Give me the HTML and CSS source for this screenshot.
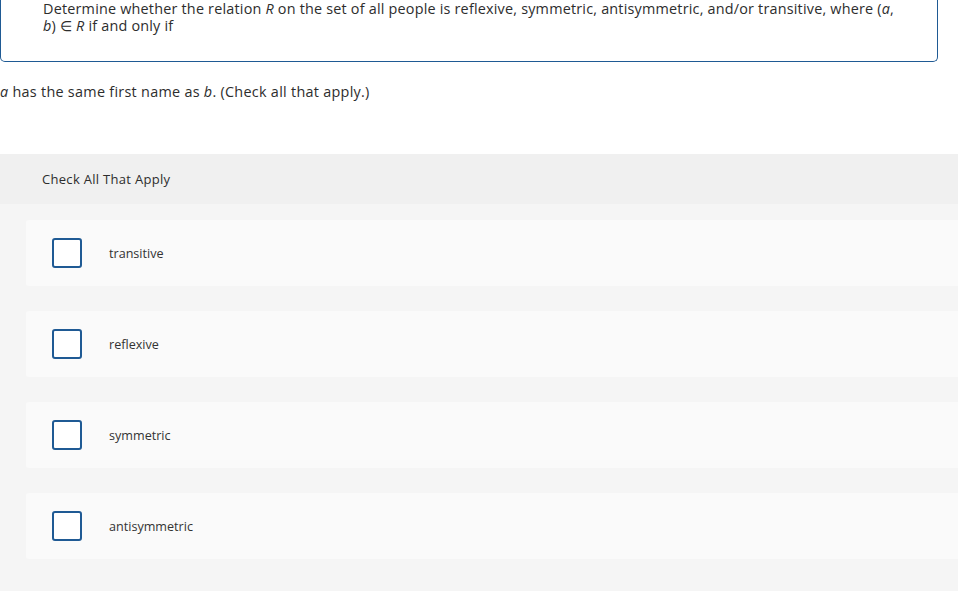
FILE: index.html
```html
<!DOCTYPE html>
<html>
<head>
<meta charset="utf-8">
<link rel="stylesheet" href="styles.css">
</head>
<body>
<div class="prompt-box">
  <p class="prompt">Determine whether the relation <i>R</i> on the set of all people is reflexive, symmetric, antisymmetric, and/or transitive, where (<i>a</i>, <i>b</i>) ∈ <i>R</i> if and only if</p>
</div>
<p class="question"><i>a</i> has the same first name as <i>b</i>. (Check all that apply.)</p>
<section class="choices">
  <div class="choices-head">Check All That Apply</div>
  <div class="choices-list">
    <label class="choice"><span class="box"></span><span class="choice-text">transitive</span></label>
    <label class="choice"><span class="box"></span><span class="choice-text">reflexive</span></label>
    <label class="choice"><span class="box"></span><span class="choice-text">symmetric</span></label>
    <label class="choice"><span class="box"></span><span class="choice-text">antisymmetric</span></label>
  </div>
</section>
</body>
</html>
```
FILE: styles.css
```css
html, body {
  margin: 0;
  padding: 0;
  background: #fff;
  font-family: "Open Sans", Arial, sans-serif;
  color: #2d2d2d;
}
.prompt-box {
  width: 938px;
  height: 62px;
  box-sizing: border-box;
  border: 1px solid #1f5a94;
  border-top: none;
  border-radius: 0 0 5px 5px;
  padding: 0 30px 0 42px;
}
.prompt {
  margin: 0;
  font-size: 14.4px;
  line-height: 17px;
  letter-spacing: 0.2px;
}
.question {
  margin: 0;
  padding-top: 21px;
  font-size: 14.4px;
  line-height: 17px;
  letter-spacing: 0.28px;
  height: 71px;
}
.choices {
  background: #f5f5f5;
  padding-bottom: 40px;
}
.choices-head {
  background: #f0f0f0;
  height: 50px;
  display: flex;
  align-items: center;
  padding-left: 42px;
  font-size: 13px;
  letter-spacing: 0.3px;
}
.choices-list {
  display: flex;
  flex-direction: column;
  gap: 25px;
  padding: 16px 0 0 26px;
}
.choice {
  display: flex;
  align-items: center;
  height: 66px;
  background: #fafafa;
  border-radius: 3px 0 0 3px;
  padding-left: 26px;
}
.box {
  width: 26px;
  height: 26px;
  border: 2px solid #1f5a94;
  border-radius: 3px;
  background: #fff;
  flex: none;
}
.choice-text {
  margin-left: 27px;
  font-size: 12.6px;
  color: #333;
}
```
